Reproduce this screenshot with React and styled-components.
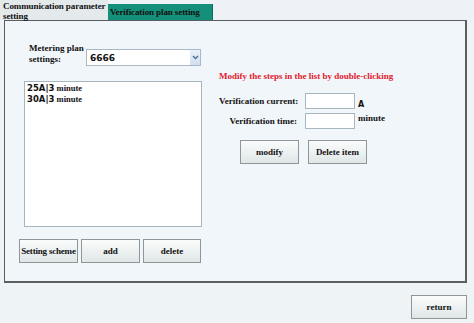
import styled, { createGlobalStyle } from "styled-components";

const GlobalStyle = createGlobalStyle`
  html, body {
    margin: 0;
    padding: 0;
    background: #eef3f6;
  }
  body {
    width: 474px;
    height: 323px;
    overflow: hidden;
  }
`;

const serif = `"Liberation Serif", "Times New Roman", "DejaVu Serif", serif`;
const sans = `"DejaVu Sans", "Liberation Sans", sans-serif`;

const Screen = styled.div`
  width: 474px;
  height: 323px;
  display: flex;
  flex-direction: column;
  background: #eef3f6;
  font-family: ${serif};
  font-weight: 700;
  color: #111;
`;

const TabBar = styled.div`
  height: 20px;
  display: flex;
  align-items: flex-end;
  background: #eef2f7;
  position: relative;
  z-index: 1;
`;

const Tab = styled.div`
  box-sizing: border-box;
  width: ${(p) => p.$width}px;
  height: ${(p) => (p.$active ? 16 : 20)}px;
  padding: ${(p) => (p.$active ? "3px 0 0 2px" : "1px 0 0 3px")};
  background: ${(p) => (p.$active ? "#14907a" : "#e4eaeb")};
  border-right: ${(p) => (p.$active ? "1px solid #0d6b5a" : "none")};
  font-family: ${serif};
  font-size: 9px;
  line-height: 10px;
  letter-spacing: -0.1px;
  color: #111;
  white-space: ${(p) => (p.$active ? "nowrap" : "normal")};
  overflow: visible;
`;

const Panel = styled.div`
  box-sizing: border-box;
  margin: 0 7px 0 4px;
  height: 263px;
  border: 1px solid #5a5e60;
  border-right-width: 2px;
  border-bottom-width: 2px;
  background: #f1f6fa;
  display: flex;
`;

const LeftCol = styled.div`
  width: 184px;
  margin-left: 14px;
  padding-top: 22px;
  display: flex;
  flex-direction: column;
`;

const SettingRow = styled.div`
  display: flex;
  align-items: flex-start;
  margin-left: 10px;
`;

const Label = styled.div`
  width: 57px;
  font-size: 9px;
  line-height: 11px;
`;

const Select = styled.div`
  box-sizing: border-box;
  width: 115px;
  height: 17px;
  margin-top: 6px;
  border: 1px solid #a9b8c6;
  background: #fff;
  display: flex;
  align-items: center;
  justify-content: space-between;
  font-family: ${sans};
  font-size: 9px;
  padding-left: 3px;
`;

const Arrow = styled.div`
  width: 10px;
  height: 15px;
  background: linear-gradient(#e9f1fb, #cfdff0);
  display: flex;
  align-items: center;
  justify-content: center;
`;

const List = styled.div`
  box-sizing: border-box;
  width: 178px;
  height: 146px;
  margin: 15px 0 0 5px;
  border: 1px solid #a8b6c0;
  background: #fff;
  padding: 1px 0 0 2px;
`;

const ListItem = styled.div`
  font-size: 8.5px;
  line-height: 11px;
`;

const Num = styled.span`
  font-family: ${sans};
  font-size: 8.5px;
`;

const ButtonRow = styled.div`
  display: flex;
  gap: ${(p) => p.$gap}px;
  margin: ${(p) => p.$margin};
`;

const Button = styled.button`
  box-sizing: border-box;
  width: ${(p) => p.$width || 59}px;
  height: 24px;
  padding: 0;
  border: 1px solid #8e9698;
  background: linear-gradient(#fbfcfc, #dfe6e6);
  font-family: ${serif};
  font-weight: 700;
  font-size: 9px;
  letter-spacing: ${(p) => (p.$tight ? "-0.2px" : "0")};
  color: #111;
  white-space: nowrap;
  overflow: visible;
`;

const RightCol = styled.div`
  margin-left: 16px;
  padding-top: 50px;
  display: flex;
  flex-direction: column;
`;

const Hint = styled.div`
  color: #e3202c;
  font-size: 9px;
  line-height: 11px;
  margin-bottom: 11px;
  white-space: nowrap;
`;

const FieldRow = styled.div`
  display: flex;
  align-items: center;
  height: 16px;
  margin-bottom: 4px;
`;

const FieldLabel = styled.div`
  width: 78px;
  text-align: right;
  font-size: 9px;
  margin-right: 8px;
  white-space: nowrap;
`;

const Input = styled.div`
  box-sizing: border-box;
  width: 50px;
  height: 16px;
  border: 1px solid #a8b6c0;
  background: #fff;
`;

const Unit = styled.div`
  margin-left: 3px;
  align-self: ${(p) => (p.$top ? "flex-start" : "flex-end")};
  font-family: ${(p) => (p.$sans ? sans : serif)};
  font-size: ${(p) => (p.$sans ? "8px" : "9px")};
`;

const Footer = styled.div`
  display: flex;
  justify-content: flex-end;
  padding: 12px 7px 0 0;
`;

export default function App() {
  return (
    <>
      <GlobalStyle />
      <Screen>
        <TabBar>
          <Tab $width={108}>Communication parameter setting</Tab>
          <Tab $width={105} $active>
            Verification plan setting
          </Tab>
        </TabBar>
        <Panel>
          <LeftCol>
            <SettingRow>
              <Label>Metering plan settings:</Label>
              <Select>
                6666
                <Arrow>
                  <svg width="7" height="5" viewBox="0 0 7 5">
                    <path d="M1 1 L3.5 3.5 L6 1" fill="none" stroke="#4a6a90" strokeWidth="1.3" />
                  </svg>
                </Arrow>
              </Select>
            </SettingRow>
            <List>
              <ListItem>
                <Num>25A|3</Num> minute
              </ListItem>
              <ListItem>
                <Num>30A|3</Num> minute
              </ListItem>
            </List>
            <ButtonRow $gap={3} $margin="12px 0 0 0">
              <Button $tight>Setting scheme</Button>
              <Button>add</Button>
              <Button $width={58}>delete</Button>
            </ButtonRow>
          </LeftCol>
          <RightCol>
            <Hint>Modify the steps in the list by double-clicking</Hint>
            <FieldRow>
              <FieldLabel>Verification current:</FieldLabel>
              <Input />
              <Unit $sans>A</Unit>
            </FieldRow>
            <FieldRow>
              <FieldLabel>Verification time:</FieldLabel>
              <Input />
              <Unit $top>minute</Unit>
            </FieldRow>
            <ButtonRow $gap={9} $margin="7px 0 0 21px">
              <Button>modify</Button>
              <Button>Delete item</Button>
            </ButtonRow>
          </RightCol>
        </Panel>
        <Footer>
          <Button $width={56}>return</Button>
        </Footer>
      </Screen>
    </>
  );
}
